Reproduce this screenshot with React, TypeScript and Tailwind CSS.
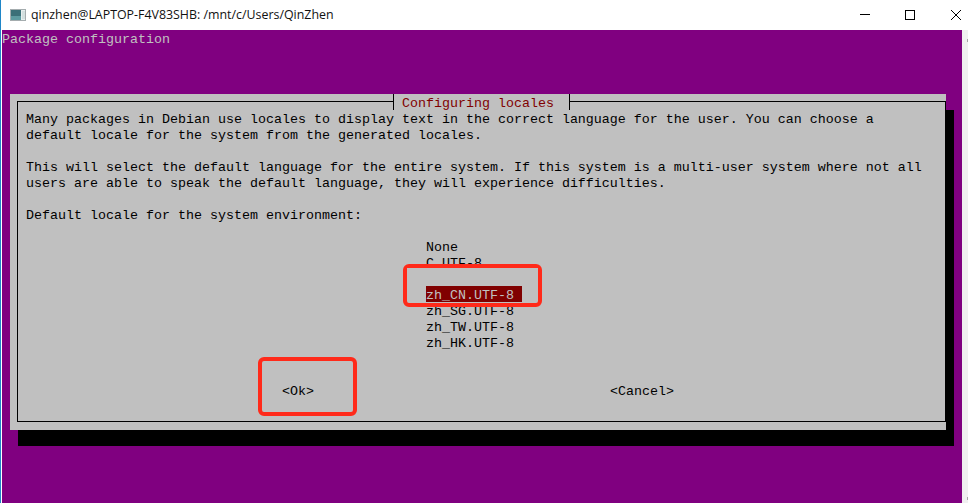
const mono = "font-['Liberation_Mono','DejaVu_Sans_Mono',monospace]";

const intro = [
  'Many packages in Debian use locales to display text in the correct language for the user. You can choose a',
  'default locale for the system from the generated locales.',
  '',
  'This will select the default language for the entire system. If this system is a multi-user system where not all',
  'users are able to speak the default language, they will experience difficulties.',
  '',
  'Default locale for the system environment:',
];

// leading is larger than the 16px cell so the baseline sits where the terminal font puts it
function Row({ children, className = '' }: { children?: React.ReactNode; className?: string }) {
  return <div className={`h-4 leading-[20px] whitespace-pre ${className}`}>{children}</div>;
}

export default function App() {
  return (
    <div className="relative w-[968px] h-[503px] overflow-hidden bg-white border-l border-[#1f86c8]">
      {/* Title bar */}
      <div className="flex items-center h-[30px] pl-[9px] bg-white">
        <svg width="16" height="12" viewBox="0 0 16 12" className="shrink-0 mr-[5px]">
          <rect x="0.5" y="0.5" width="15" height="11" fill="#e6eeee" stroke="#a4acae" />
          <rect x="1" y="1" width="10" height="10" fill="#3b6f78" />
          <rect x="1" y="7" width="10" height="4" fill="#5d9aa0" />
          <rect x="12" y="2" width="3" height="8" fill="#d3dfdf" />
        </svg>
        <span className="text-[12.4px] text-[#111] font-['Open_Sans','Noto_Sans',sans-serif]">
          qinzhen@LAPTOP-F4V83SHB: /mnt/c/Users/QinZhen
        </span>
        <div className="ml-auto flex items-center gap-[35px] pr-[7px] text-black">
          <svg width="10" height="10" viewBox="0 0 10 10"><path d="M0 4.5H10" stroke="currentColor" fill="none" /></svg>
          <svg width="10" height="10" viewBox="0 0 10 10"><rect x="0.5" y="0.5" width="9" height="9" stroke="currentColor" fill="none" /></svg>
          <svg width="10" height="10" className="ml-px" viewBox="0 0 10 10"><path d="M0 0L10 10M10 0L0 10" stroke="currentColor" fill="none" /></svg>
        </div>
      </div>

      {/* Terminal */}
      <div className="flex h-[473px]">
        <div className="w-px bg-white" />
        <div className={`w-[960px] bg-[#800080] text-[13.33px] ${mono}`}>
          <Row className="text-[#c0c0c0]">Package configuration</Row>

          {/* Dialog */}
          <div className="w-[936px] h-[336px] mt-[48px] ml-2 pl-[7px] pt-[7px] bg-[#c0c0c0] shadow-[8px_16px_0_#000] text-black">
            <div className="relative h-[321px] w-[929px] border border-black pl-2 pt-2">
              <div className="absolute -top-[8px] left-[375px] h-4 w-[177px] border-x border-black bg-[#c0c0c0]" />
              <div className="absolute -top-[8px] left-[384px] h-4 leading-[20px] text-[#800000]">Configuring locales</div>

              {intro.map((line, i) => (
                <Row key={i}>{line}</Row>
              ))}

              <div className="mt-4 pl-[400px]">
                <Row>None</Row>
                <Row>C.UTF-8</Row>
                <Row />
                <Row className="w-[96px] bg-[#800000] text-[#c0c0c0]">zh_CN.UTF-8</Row>
                <Row>zh_SG.UTF-8</Row>
                <Row>zh_TW.UTF-8</Row>
                <Row>zh_HK.UTF-8</Row>
              </div>

              <div className="flex mt-[32px] pl-[256px]">
                <Row className="w-[328px]">{'<Ok>'}</Row>
                <Row>{'<Cancel>'}</Row>
              </div>
            </div>
          </div>
        </div>

        {/* Scrollbar */}
        <div className="w-[6px] bg-[#f0f0f0] flex flex-col justify-between items-end pt-[9px] pb-[3px]">
          <div className="w-px h-[3px] bg-[#a6a6a6]" />
          <div className="w-px h-[3px] bg-[#a6a6a6]" />
        </div>
      </div>

      {/* Red annotations drawn over the screenshot */}
      <div className="absolute left-[402px] top-[264px] w-[139px] h-[43px] border-4 border-[#ff2a1a] rounded-[6px]">
        <div className="h-[18px] bg-[#c0c0c0]" />
      </div>
      <div className="absolute left-[257px] top-[357px] w-[99px] h-[59px] border-4 border-[#ff2a1a] rounded-[6px]" />
    </div>
  );
}
